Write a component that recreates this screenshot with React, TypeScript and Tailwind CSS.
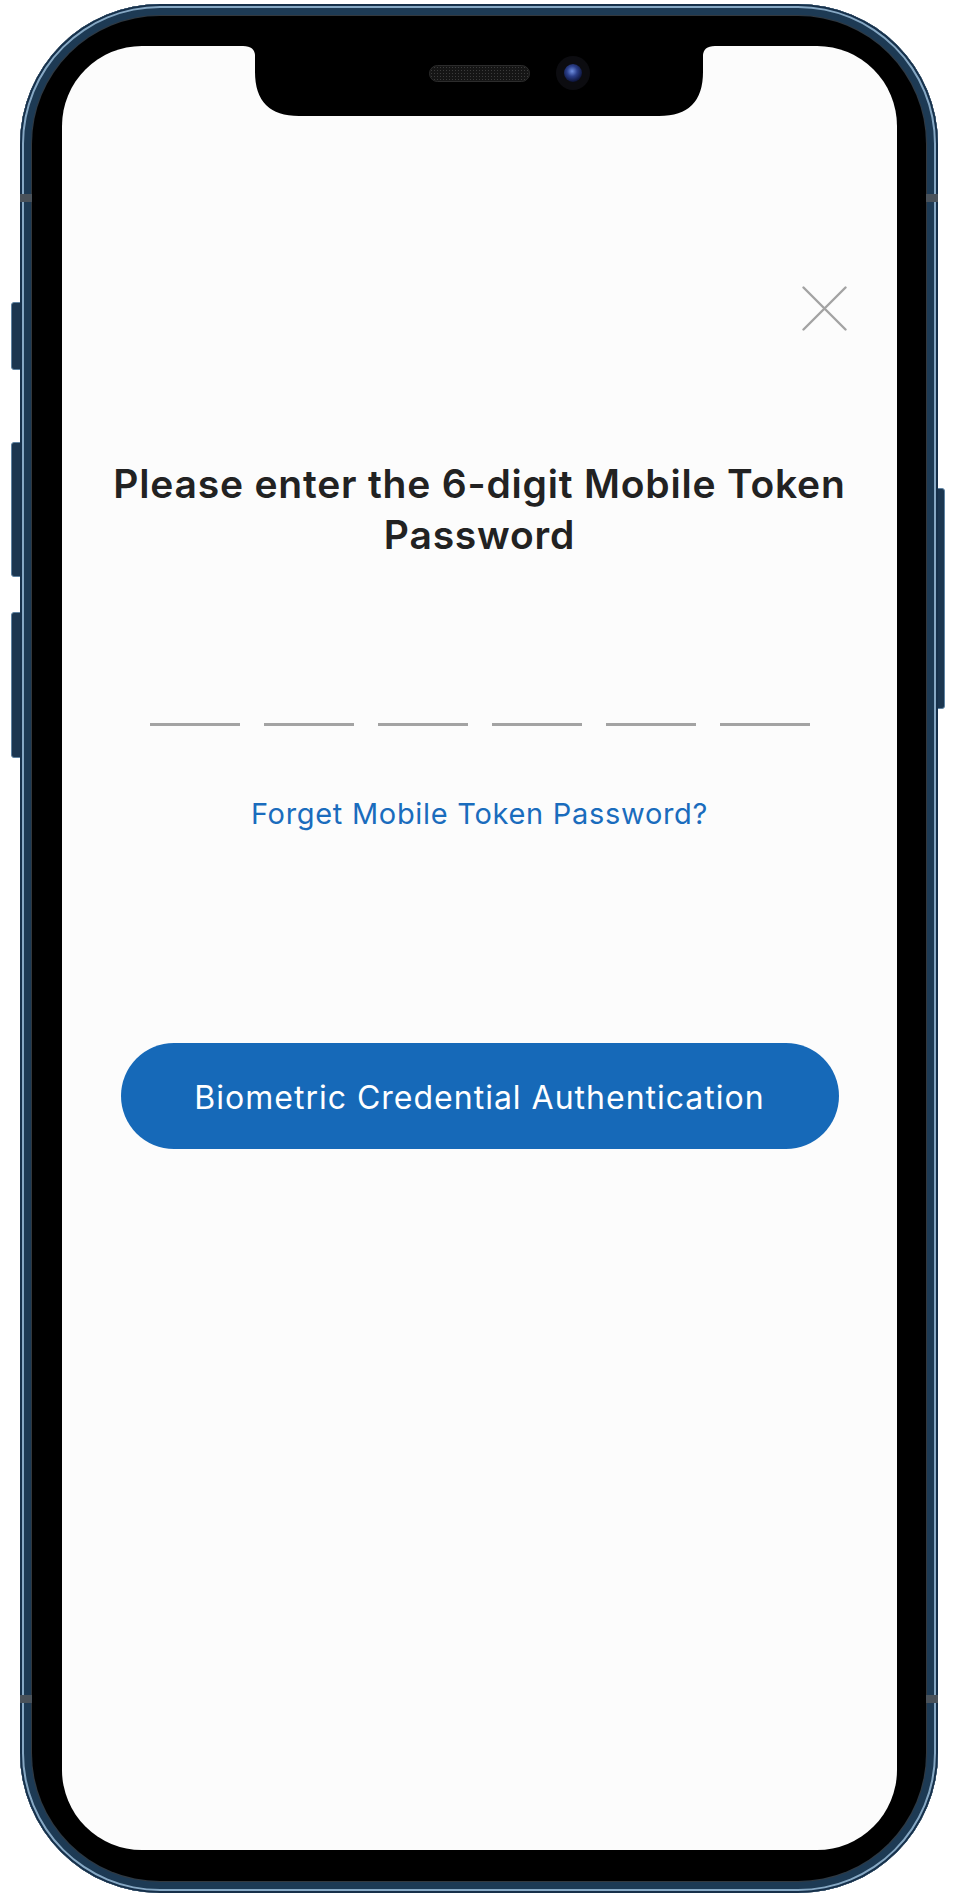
import React from 'react'

const digits = [0, 1, 2, 3, 4, 5]

function CloseIcon() {
  return (
    <svg width="45" height="45" viewBox="0 0 45 45" fill="none" stroke="#a3a3a3" strokeWidth="2.4" strokeLinecap="round">
      <path d="M1.5 1.5L43.5 43.5M43.5 1.5L1.5 43.5" />
    </svg>
  )
}

// Sensor housing at the top of the display, with the small fillets where it meets the glass
function Notch() {
  return (
    <div className="absolute left-[181px] top-0 w-[472px] h-[70px]">
      <svg width="472" height="70" viewBox="0 0 472 70" className="absolute inset-0">
        <path d="M0 0H472Q460 0 460 10V26Q460 70 416 70H56Q12 70 12 26V10Q12 0 0 0Z" fill="#000" />
      </svg>
      <div className="relative flex items-center gap-[26px] pl-[186px] pt-[10px] h-[44px]">
        <div className="w-[101px] h-[17px] rounded-full border border-[#2c2c2c] bg-[#151515] bg-[radial-gradient(#3b3b3b_0.8px,transparent_0.9px)] bg-[length:3px_3px]" />
        <div className="w-[34px] h-[34px] rounded-full bg-[#0c0c10] flex items-center justify-center">
          <div className="w-[18px] h-[18px] rounded-full bg-[radial-gradient(circle_at_45%_40%,#6f8fe0_0%,#2b3f8a_35%,#0b1236_75%)]" />
        </div>
      </div>
    </div>
  )
}

export default function App() {
  return (
    <div className="w-[960px] h-[1900px] bg-white pt-[4px] pl-[20px]">
      <div className="relative w-[918px] h-[1889px]">
        {/* mute and volume keys */}
        <div className="absolute left-[-9px] top-[298px] flex flex-col">
          <div className="w-[11px] h-[68px] rounded-l-[3px] bg-[#1b3650] border border-[#5f83a2]" />
          <div className="mt-[72px] w-[11px] h-[135px] rounded-l-[3px] bg-[#1b3650] border border-[#5f83a2]" />
          <div className="mt-[35px] w-[11px] h-[146px] rounded-l-[3px] bg-[#1b3650] border border-[#5f83a2]" />
        </div>
        {/* power key */}
        <div className="absolute right-[-7px] top-[484px] w-[9px] h-[221px] rounded-r-[3px] bg-[#1b3650] border border-[#5f83a2]" />

        <div className="relative h-full rounded-[140px] bg-[#1b3852] p-[12px] shadow-[inset_0_0_0_2px_#16304a,inset_0_0_0_4px_#86a8c4,inset_0_0_0_11px_#1d3a54,inset_0_0_0_12px_#33383d]">
          {/* antenna bands */}
          <div className="absolute inset-x-0 top-[190px] flex justify-between">
            <div className="w-[12px] h-[8px] bg-[#4a525a]" />
            <div className="w-[12px] h-[8px] bg-[#4a525a]" />
          </div>
          <div className="absolute inset-x-0 bottom-[190px] flex justify-between">
            <div className="w-[12px] h-[8px] bg-[#4a525a]" />
            <div className="w-[12px] h-[8px] bg-[#4a525a]" />
          </div>

          <div className="h-full rounded-[128px] bg-black pt-[30px] pb-[31px] pl-[30px] pr-[29px]">
            <div className="relative h-full rounded-[80px] bg-[#fcfcfc] overflow-hidden">
              <Notch />

              <div className="flex flex-col items-center pt-[240px]">
                <div className="self-end pr-[50px] h-[45px]">
                  <CloseIcon />
                </div>

                <h1 className="mt-[127px] text-center text-[39px] leading-[51px] font-semibold tracking-[0.8px] text-[#222222] font-['Inter',sans-serif]">
                  Please enter the 6-digit Mobile Token
                  <br />
                  Password
                </h1>

                <div className="mt-[163px] flex gap-[24px]">
                  {digits.map((d) => (
                    <div key={d} className="w-[90px] h-[3px] bg-[#a3a3a3]" />
                  ))}
                </div>

                <a className="mt-[71px] text-[29px] leading-[34px] tracking-[0.7px] text-[#1a6cbd] font-['Inter',sans-serif]">
                  Forget Mobile Token Password?
                </a>

                <button
                  type="button"
                  className="mt-[212px] w-[718px] h-[106px] pt-[4px] rounded-full bg-[#1669b8] text-white text-[32px] tracking-[1px] font-['Inter',sans-serif]"
                >
                  Biometric Credential Authentication
                </button>
              </div>
            </div>
          </div>
        </div>
      </div>
    </div>
  )
}
